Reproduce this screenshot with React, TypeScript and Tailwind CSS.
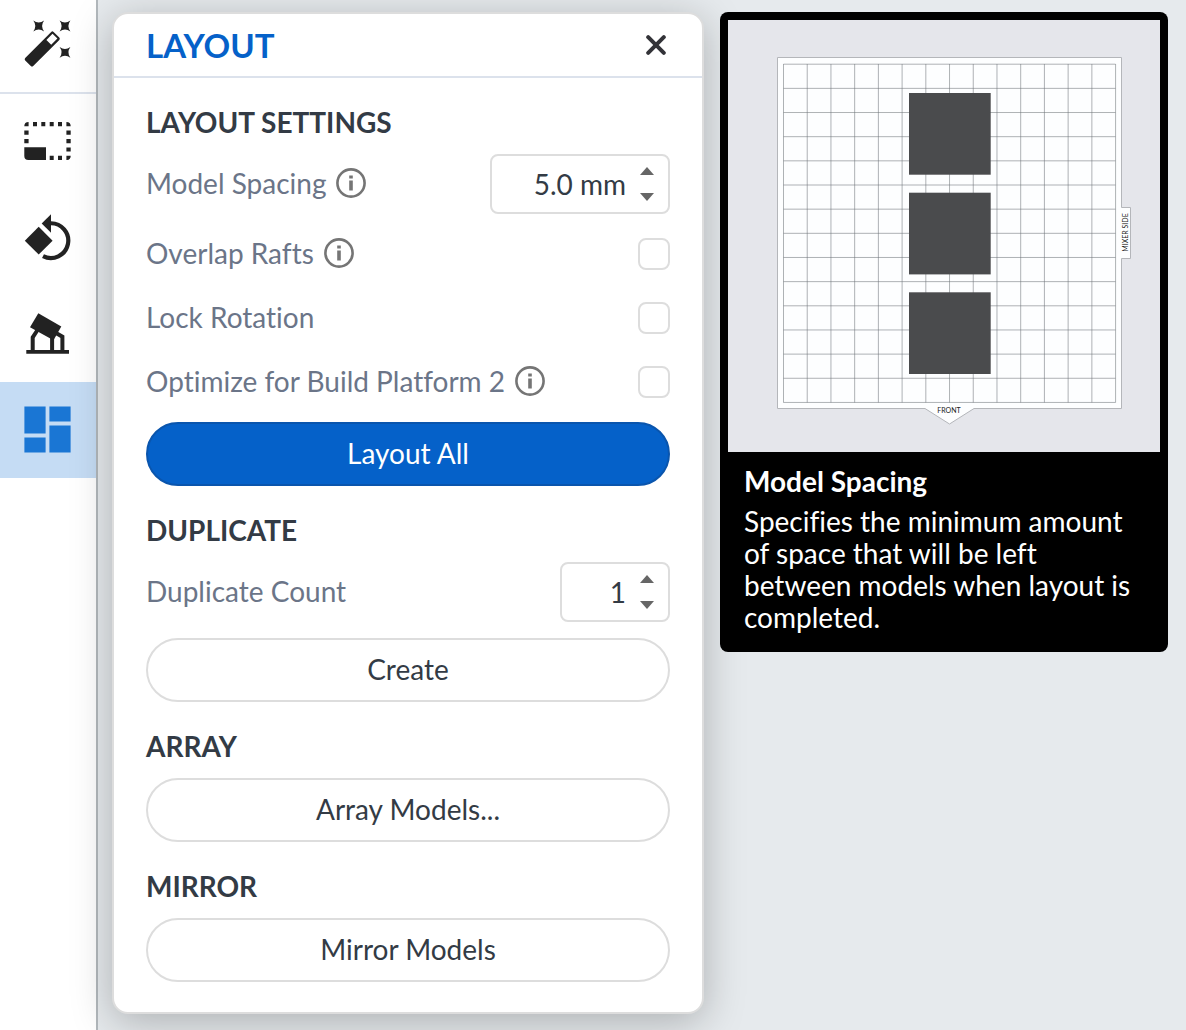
import { useState } from 'react';
import type { ReactNode } from 'react';
import clsx from 'clsx';

const WandIcon = () => (
  <svg viewBox="0 0 96 92" className="w-full h-[92px] text-[#222222]" fill="currentColor">
    <path
      fillRule="evenodd"
      d="M51.2 31.9 Q52.4 30.7 53.6 31.9 L59.3 37.5 Q60.4 38.7 59.3 39.9 L33.2 66 Q32 67.1 30.8 66 L25.2 60.4 Q24.1 59.3 25.2 58.1 Z M52.5 33.8 L46.4 39.9 L51.2 44.7 L57.4 38.6 Z"
    />
    {['translate(38.7 26)', 'translate(65 26)', 'translate(65 52.3)'].map((t) => (
      <path key={t} transform={t} d="M-5.4 -5.4 Q0 -1.4 5.4 -5.4 Q1.4 0 5.4 5.4 Q0 1.4 -5.4 5.4 Q-1.4 0 -5.4 -5.4 Z" />
    ))}
  </svg>
);

const ScaleIcon = () => (
  <svg viewBox="0 0 96 96" className="size-full text-[#222222]" fill="currentColor">
    <path d="M24.3 32.3 Q24.3 28 28.6 28 V32.3 Z M66.4 28 Q70.7 28 70.7 32.3 H66.4 Z M66.4 66 H67 Q70.7 65.6 70.7 61.7 H66.4 Z" />
    <path d="M33 28h4v4.2h-4z M41.3 28h4v4.2h-4z M49.7 28h4v4.2h-4z M58 28h4v4.2h-4z" />
    <path d="M24.3 36.6h4.3v4.2h-4.3z M24.3 45h4.3v4.2h-4.3z" />
    <path d="M66.4 36.6h4.3v4.2h-4.3z M66.4 45h4.3v4.2h-4.3z M66.4 53.4h4.3v4.2h-4.3z" />
    <path d="M49.7 61.8h4v4.2h-4z M58 61.8h4v4.2h-4z" />
    <path d="M24.3 53.3 H46 V66 H28.3 Q24.3 66 24.3 62 Z" />
  </svg>
);

const RotateIcon = () => (
  <svg viewBox="0 0 96 96" className="size-full text-[#222222]" fill="currentColor">
    <path d="M38.7 36.8 L52.6 50.7 L38.7 64.6 L24.8 50.7 Z" />
    <path d="M41.7 33.4 L51 24.3 V42.7 Z" />
    <path d="M50 33.3 A17.4 17.4 0 1 1 43 66.2" fill="none" stroke="currentColor" strokeWidth="4.2" />
  </svg>
);

const SupportIcon = () => (
  <svg viewBox="0 0 96 96" className="size-full text-[#222222]" fill="currentColor">
    <path d="M38.3 27.3 L61.3 40.5 L53.5 54.3 L30 41.3 Z" />
    <path
      d="M32.7 65 V51.3 L37.2 44.5 M52.1 52 V65 M56 47 L62.4 50.7 V65"
      fill="none"
      stroke="currentColor"
      strokeWidth="4"
    />
    <path d="M26.3 64 H69 V67.7 H26.3 Z" />
  </svg>
);

const LayoutIcon = () => (
  <svg viewBox="0 0 96 96" className="size-full text-[#1a76d4]" fill="currentColor">
    <path d="M24.4 24.4H45.6V51.4H24.4z M49.4 24.4H70.6V39.6H49.4z M24.4 55.4H45.6V70.6H24.4z M49.4 43.4H70.6V70.6H49.4z" />
  </svg>
);

const tools = [
  { name: 'Scale', icon: <ScaleIcon /> },
  { name: 'Rotate', icon: <RotateIcon /> },
  { name: 'Supports', icon: <SupportIcon /> },
  { name: 'Layout', icon: <LayoutIcon /> },
];

const InfoButton = ({ topic }: { topic: string }) => (
  <button type="button" aria-label={`About ${topic}`} className="shrink-0 text-[#757575]">
    <svg viewBox="0 0 30 30" className="size-[30px]">
      <circle cx="15" cy="15" r="13.6" fill="none" stroke="currentColor" strokeWidth="2.6" />
      <path d="M13.2 7.4h3.6v3h-3.6z M13.2 12.6h3.6v10h-3.6z" fill="currentColor" />
    </svg>
  </button>
);

const SectionTitle = ({ children }: { children: ReactNode }) => (
  <h2 className="mt-7 mb-4 text-[28px] leading-8 font-bold text-[#333b45]">{children}</h2>
);

const FieldLabel = ({ id, text, info }: { id: string; text: string; info?: boolean }) => (
  <div className="flex items-center gap-2.5 pb-0.5">
    <label htmlFor={id} className="text-[28px] leading-8 text-[#6b7588]">
      {text}
    </label>
    {info && <InfoButton topic={text} />}
  </div>
);

type SpinnerProps = {
  id: string;
  value: string;
  className: string;
  onStep: (delta: number) => void;
};

const Spinner = ({ id, value, className, onStep }: SpinnerProps) => (
  <div className={clsx('flex h-[60px] items-center gap-3.5 rounded-lg border-2 border-[#dddddd] pr-3.5', className)}>
    <input
      id={id}
      type="text"
      readOnly
      value={value}
      className="w-full min-w-0 bg-transparent text-right text-[28px] leading-8 text-[#333b45] outline-none"
    />
    <div className="flex shrink-0 flex-col text-[#666666]">
      <button type="button" aria-label="Increase" onClick={() => onStep(1)} className="flex h-[26px] items-center">
        <svg viewBox="0 0 14 8" className="h-2 w-3.5" fill="currentColor">
          <path d="M0 8 L7 0 L14 8 Z" />
        </svg>
      </button>
      <button type="button" aria-label="Decrease" onClick={() => onStep(-1)} className="flex h-[26px] items-center">
        <svg viewBox="0 0 14 8" className="h-2 w-3.5" fill="currentColor">
          <path d="M0 0 L14 0 L7 8 Z" />
        </svg>
      </button>
    </div>
  </div>
);

const CheckRow = ({ id, text, info }: { id: string; text: string; info?: boolean }) => (
  <div className="flex h-16 items-center justify-between">
    <FieldLabel id={id} text={text} info={info} />
    <input
      id={id}
      type="checkbox"
      className="size-8 shrink-0 appearance-none rounded-lg border-2 border-[#dddddd] bg-white checked:bg-[#0561c9]"
    />
  </div>
);

const OutlineButton = ({ children }: { children: ReactNode }) => (
  <button
    type="button"
    className="h-16 w-full rounded-full border-2 border-[#dddddd] bg-white pb-0.5 text-[28px] leading-8 text-[#333b45]"
  >
    {children}
  </button>
);

// Build platform seen from above, with three evenly spaced models
const PlatformDrawing = () => {
  const lines = Array.from({ length: 15 }, (_, i) => i);
  return (
    <svg viewBox="0 0 432 432" className="block aspect-square w-full bg-[#e5e6eb]">
      <path
        d="M49.5 37.5 H393.5 V187.5 H402.5 V238.5 H393.5 V388.5 H246 L221.5 404 L197 388.5 H49.5 Z"
        fill="#fdfeff"
        stroke="#b4b6ba"
      />
      {lines.map((i) => (
        <g key={i} stroke="#6e7278" strokeOpacity="0.55">
          <line x1={55.5 + i * 23.72} x2={55.5 + i * 23.72} y1="44" y2="382.5" />
          <line x1="55.5" x2="387.5" y1={44.2 + i * 24.16} y2={44.2 + i * 24.16} />
        </g>
      ))}
      {[73, 172.7, 272.3].map((y) => (
        <rect key={y} x="181" y={y} width="81.7" height="81.7" fill="#4a4b4d" />
      ))}
      <text x="221" y="393" textAnchor="middle" fontSize="7" fill="#222222">
        FRONT
      </text>
      <text transform="translate(399.5 212.5) rotate(-90)" textAnchor="middle" fontSize="7" fill="#222222">
        MIXER SIDE
      </text>
    </svg>
  );
};

const App = () => {
  const [spacing, setSpacing] = useState(5);
  const [count, setCount] = useState(1);

  return (
    <div className="flex min-h-screen bg-[#e6eaed] font-['Lato',sans-serif] [font-variant-ligatures:none]">
      {/* Tool bar */}
      <nav className="w-[98px] shrink-0 border-r-2 border-[#b2b8bc] bg-white">
        <button type="button" aria-label="Magic wand" className="block w-full border-b-2 border-[#dce2ec]">
          <WandIcon />
        </button>
        {tools.map((tool) => (
          <button
            key={tool.name}
            type="button"
            aria-label={tool.name}
            className={clsx('block h-24 w-full', tool.name === 'Layout' && 'bg-[#c5dcf4]')}
          >
            {tool.icon}
          </button>
        ))}
      </nav>

      <main className="flex flex-1 items-start gap-4 pt-3 pr-[18px] pb-4 pl-3.5">
        {/* Layout panel */}
        <section className="min-w-0 flex-1 rounded-2xl border-2 border-[#dddddd] bg-white shadow-[0_8px_40px_rgba(0,0,0,0.25)]">
          <header className="flex h-16 items-center justify-between border-b-2 border-[#dce2ec] px-8">
            <h1 className="text-[33px] leading-10 font-bold text-[#0561c9]">LAYOUT</h1>
            <button type="button" aria-label="Close" className="p-1 text-[#333338]">
              <svg viewBox="0 0 20 20" className="size-5" fill="none" stroke="currentColor" strokeWidth="4" strokeLinecap="round">
                <path d="M2.2 2.2 L17.8 17.8 M17.8 2.2 L2.2 17.8" />
              </svg>
            </button>
          </header>

          <div className="px-8 pb-[30px]">
            <SectionTitle>LAYOUT SETTINGS</SectionTitle>
            <div className="mb-2 flex items-center justify-between">
              <FieldLabel id="spacing" text="Model Spacing" info />
              <Spinner
                id="spacing"
                value={`${spacing.toFixed(1)} mm`}
                className="w-[180px]"
                onStep={(d) => setSpacing(Math.max(0, spacing + d * 0.5))}
              />
            </div>
            <CheckRow id="overlap" text="Overlap Rafts" info />
            <CheckRow id="lock" text="Lock Rotation" />
            <CheckRow id="optimize" text="Optimize for Build Platform 2" info />
            <button
              type="button"
              className="mt-2 h-16 w-full rounded-full border-2 border-[#0a55ad] bg-[#0561c9] pb-0.5 text-[28px] leading-8 text-white"
            >
              Layout All
            </button>

            <SectionTitle>DUPLICATE</SectionTitle>
            <div className="mb-4 flex items-center justify-between">
              <FieldLabel id="count" text="Duplicate Count" />
              <Spinner
                id="count"
                value={String(count)}
                className="w-[110px]"
                onStep={(d) => setCount(Math.max(1, count + d))}
              />
            </div>
            <OutlineButton>Create</OutlineButton>

            <SectionTitle>ARRAY</SectionTitle>
            <OutlineButton>Array Models...</OutlineButton>

            <SectionTitle>MIRROR</SectionTitle>
            <OutlineButton>Mirror Models</OutlineButton>
          </div>
        </section>

        {/* Help card */}
        <aside className="w-[448px] shrink-0 rounded-lg bg-black p-2 text-white">
          <PlatformDrawing />
          <div className="px-4 pt-[13px] pb-[11px] text-[28px] leading-8">
            <h3 className="mb-2 font-bold">Model Spacing</h3>
            <p>Specifies the minimum amount of space that will be left between models when layout is completed.</p>
          </div>
        </aside>
      </main>
    </div>
  );
};

export default App;
